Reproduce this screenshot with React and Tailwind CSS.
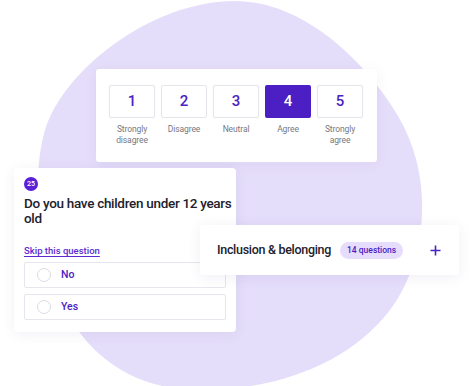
import React from 'react';

// 量表選項
const scale = [
  { n: 1, label: ['Strongly', 'disagree'] },
  { n: 2, label: ['Disagree'] },
  { n: 3, label: ['Neutral'] },
  { n: 4, label: ['Agree'], active: true },
  { n: 5, label: ['Strongly', 'agree'] },
];

function Blob() {
  return (
    <svg className="absolute left-0 top-0" width="474" height="386" viewBox="0 0 474 386">
      <path
        d="M235 1 C300 1 362 56 398 116 C436 180 426 262 390 310 C350 362 280 390 200 390 C130 390 84 352 62 302 C40 252 30 182 45 130 C62 72 150 1 235 1 Z"
        fill="#e5defa"
      />
    </svg>
  );
}

function ScaleCard() {
  return (
    <div className="absolute left-[96px] top-[69px] w-[281px] h-[93px] bg-white rounded-[3px] shadow-[0_2px_14px_rgba(60,40,120,0.06)] px-[13px] pt-[16px]">
      <div className="flex gap-[6px]">
        {scale.map((s) => (
          <div key={s.n} className="flex flex-col items-center w-[46px]">
            <div
              className={
                s.active
                  ? 'w-[46px] h-[33px] flex items-center justify-center rounded-[2px] bg-[#4b1fc3] text-white text-[15px] font-medium'
                  : 'w-[46px] h-[33px] flex items-center justify-center rounded-[2px] border border-[#e4e4ea] bg-white text-[#4b22c2] text-[15px] font-medium'
              }
            >
              {s.n}
            </div>
            <div className="mt-[6px] text-[8.5px] leading-[11px] tracking-[-0.1px] text-[#77777f] text-center">
              {s.label.map((l) => (
                <div key={l}>{l}</div>
              ))}
            </div>
          </div>
        ))}
      </div>
    </div>
  );
}

function QuestionCard() {
  return (
    <div className="absolute left-[14px] top-[168px] w-[222px] h-[164px] bg-white rounded-[4px] shadow-[0_2px_14px_rgba(60,40,120,0.07)] pl-[10px] pr-[4px] pt-[9px]">
      <div className="w-[14px] h-[14px] rounded-full bg-[#5a20d8] text-white text-[7px] font-medium flex items-center justify-center">
        25
      </div>
      <div className="mt-[5px] text-[13.5px] leading-[15px] tracking-[-0.3px] font-medium text-[#22212c]">
        Do you have children under 12 years old
      </div>
      <div className="mt-[18px] text-[9.5px] font-medium text-[#5b2bd0] underline underline-offset-2">
        Skip this question
      </div>
      <div className="mt-[4px] mr-[6px] flex flex-col gap-[6px]">
        {['No', 'Yes'].map((o) => (
          <div key={o} className="h-[26px] border border-[#e6e6ec] rounded-[2px] flex items-center pl-[12px] gap-[10px]">
            <div className="w-[14px] h-[14px] rounded-full border border-[#dcdce2]"></div>
            <span className="text-[10.5px] font-medium text-[#4b22c2]">{o}</span>
          </div>
        ))}
      </div>
    </div>
  );
}

function CategoryCard() {
  return (
    <div className="absolute left-[200px] top-[225px] w-[259px] h-[50px] bg-white rounded-[3px] shadow-[0_2px_14px_rgba(60,40,120,0.08)] flex items-center pl-[17px] pr-[18px]">
      <span className="text-[12.5px] tracking-[-0.3px] font-medium text-[#22212c]">Inclusion &amp; belonging</span>
      <span className="ml-[9px] h-[17px] px-[7px] rounded-full bg-[#e6dcfb] text-[#4b22c2] text-[8.5px] font-medium flex items-center">
        14 questions
      </span>
      <svg className="ml-auto" width="11" height="11" viewBox="0 0 11 11">
        <path d="M5.5 0.5 V10.5 M0.5 5.5 H10.5" stroke="#4b22c2" strokeWidth="1.6" />
      </svg>
    </div>
  );
}

export default function App() {
  return (
    <div className="relative w-[474px] h-[386px] bg-white overflow-hidden font-['Roboto',sans-serif]">
      <Blob />
      <ScaleCard />
      <QuestionCard />
      <CategoryCard />
    </div>
  );
}
